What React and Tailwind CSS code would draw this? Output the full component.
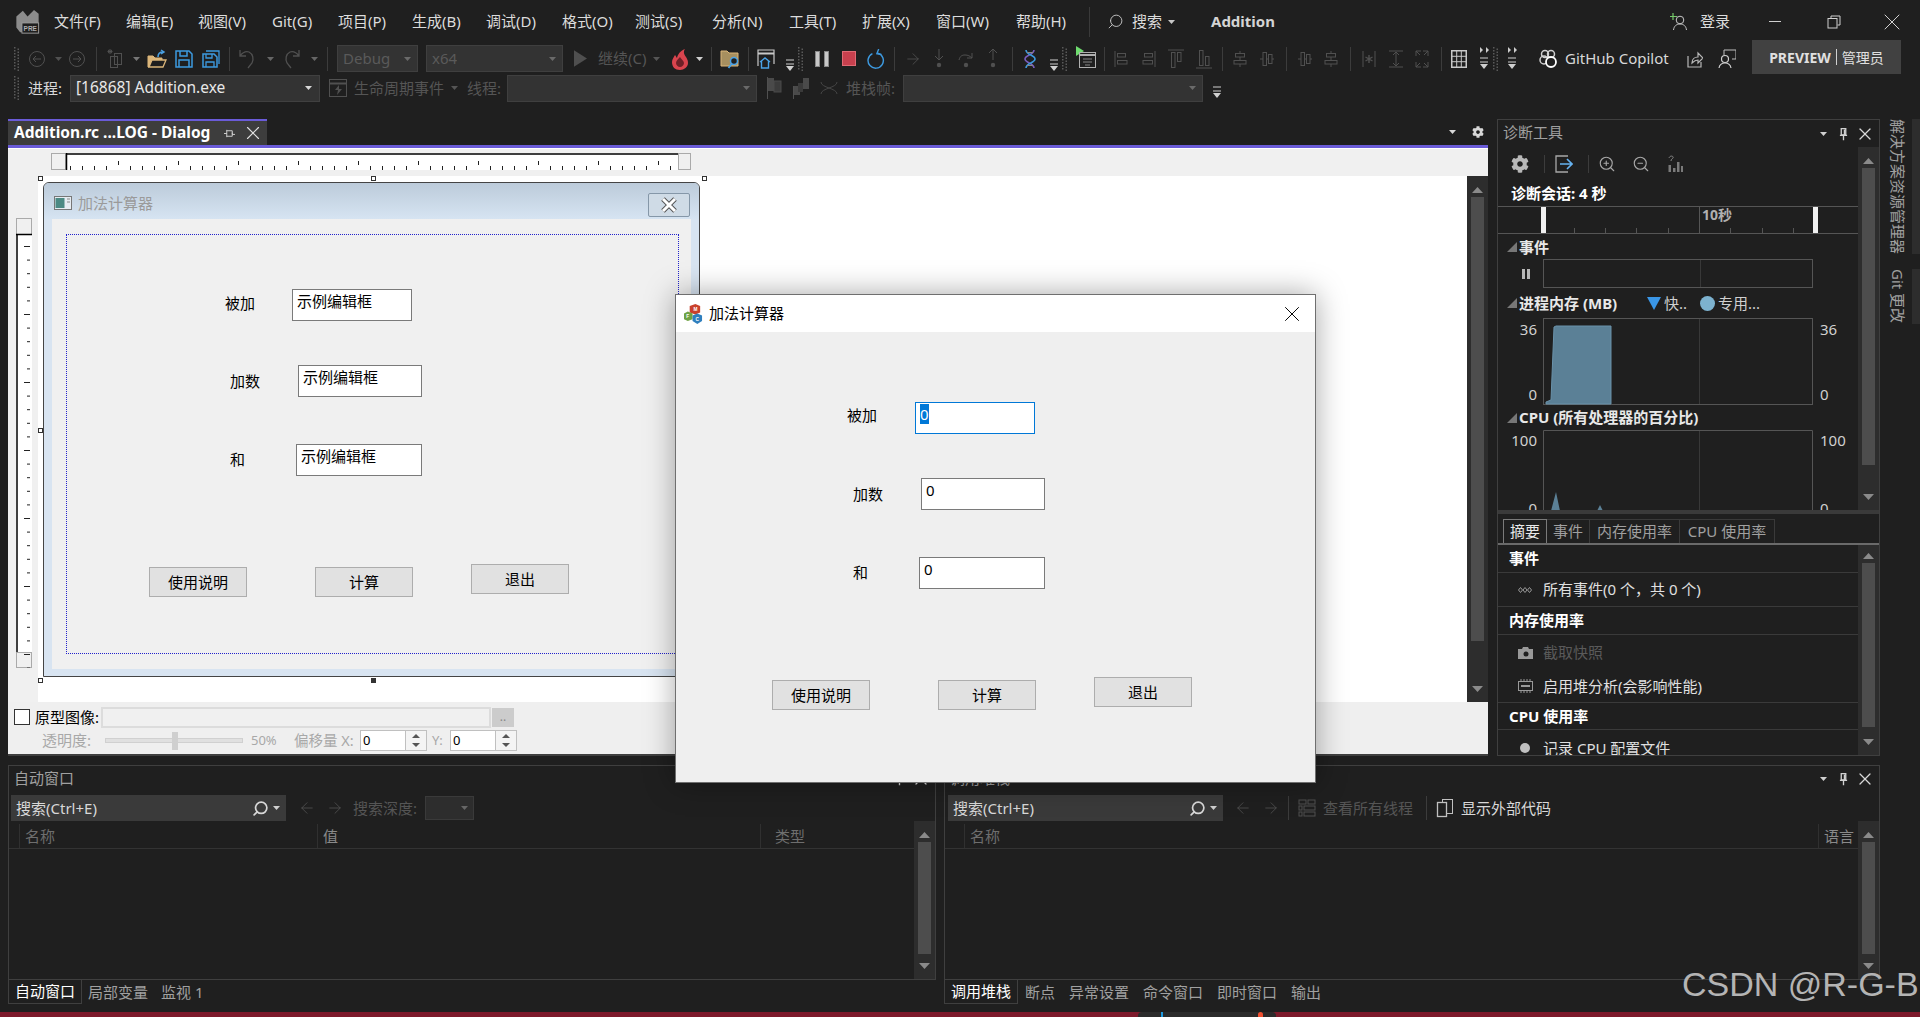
import React from 'react';
import { X, Search, ZoomIn, ZoomOut, ArrowLeft, ArrowRight } from 'lucide-react';
import { FaCog } from 'react-icons/fa';

const Dd = ({ c = '#bdbdbd', className = '' }) => (
  <svg viewBox="0 0 7 4" className={`w-[7px] h-[4px] shrink-0 ${className}`}><path d="M0 0h7L3.5 4z" fill={c} /></svg>
);
const StackDd = ({ className = '' }) => (
  <svg viewBox="0 0 8 14" className={`w-[8px] h-[14px] shrink-0 mt-[12px] ${className}`}><path d="M0 2h8M0 6h8" stroke="#d0d0d0" strokeWidth="1" /><path d="M0 8h8L4 13z" fill="#d0d0d0" /></svg>
);
const Grip = ({ className = '' }) => (
  <svg viewBox="0 0 6 24" className={`w-[6px] h-[24px] shrink-0 ${className}`}>
    {[0, 1, 2, 3, 4, 5, 6, 7].map(i => <g key={i} fill="#5a5a5a"><rect x="0" y={i * 3} width="1.5" height="1.5" /><rect x="3.5" y={i * 3 + 1.5} width="1.5" height="1.5" /></g>)}
  </svg>
);
const Sep = ({ className = '' }) => <div className={`w-px h-[24px] bg-[#3c3c3c] shrink-0 ${className}`} />;
const G = '#505050';
const Box = ({ className = '', children, vb = '0 0 16 16' }) => <svg viewBox={vb} fill="none" className={`shrink-0 ${className}`}>{children}</svg>;
const AlignL = ({ className }) => <Box className={`w-[14px] h-[18px] ${className}`} vb="0 0 14 18"><path d="M1 1v16" stroke={G} /><rect x="3.5" y="3.5" width="8" height="3.5" stroke={G} /><rect x="3.5" y="10.5" width="9.5" height="3.5" stroke={G} /></Box>;
const AlignR = ({ className }) => <Box className={`w-[14px] h-[18px] ${className}`} vb="0 0 14 18"><path d="M13 1v16" stroke={G} /><rect x="2.5" y="3.5" width="8" height="3.5" stroke={G} /><rect x="1" y="10.5" width="9.5" height="3.5" stroke={G} /></Box>;
const AlignT = ({ className }) => <Box className={`w-[16px] h-[20px] ${className}`} vb="0 0 16 20"><path d="M0 1h16" stroke={G} /><rect x="3.5" y="3.5" width="3.5" height="15" stroke={G} /><rect x="9.5" y="3.5" width="3.5" height="9" stroke={G} /></Box>;
const AlignB = ({ className }) => <Box className={`w-[16px] h-[20px] ${className}`} vb="0 0 16 20"><path d="M0 19h16" stroke={G} /><rect x="3.5" y="1.5" width="3.5" height="15" stroke={G} /><rect x="9.5" y="7.5" width="3.5" height="9" stroke={G} /></Box>;
const AlignCH = ({ className }) => <Box className={`w-[14px] h-[18px] ${className}`} vb="0 0 14 18"><path d="M7 1v16" stroke={G} /><rect x="2.5" y="3.5" width="9" height="3.5" stroke={G} fill="#1f1f1f" /><rect x="1" y="10.5" width="12" height="3.5" stroke={G} fill="#1f1f1f" /></Box>;
const AlignCV = ({ className }) => <Box className={`w-[14px] h-[18px] ${className}`} vb="0 0 14 18"><path d="M0 9h14" stroke={G} /><rect x="3" y="2.5" width="3.5" height="13" stroke={G} fill="#1f1f1f" /><rect x="8.5" y="4.5" width="3.5" height="9" stroke={G} fill="#1f1f1f" /></Box>;
const Pin = ({ className = '' }) => <svg viewBox="0 0 10 14" className={`w-[9px] h-[14px] shrink-0 ${className}`} fill="none"><path d="M2.5 1h5v7h-5z" stroke="#d0d0d0" strokeWidth="1.5" /><path d="M1 8.5h8M5 9v5" stroke="#d0d0d0" strokeWidth="1.5" /><path d="M6 2v6" stroke="#d0d0d0" strokeWidth="1.4" /></svg>;
const Tri = () => <svg viewBox="0 0 10 10" className="w-[10px] h-[10px] shrink-0"><path d="M10 0v10H0z" fill="#777" /></svg>;

const Logo = () => (
  <svg viewBox="0 0 26 28" className="w-[25px] h-[26px] ml-[15px] shrink-0">
    <path d="M1 8 L8 2 L13 8 L20 1 L25 5 V15 H9 V25 H5 L1 20z" fill="#8c8c8c" />
    <rect x="7" y="15" width="18" height="11" fill="#1f1f1f" stroke="#a0a0a0" />
    <text x="16" y="24" fontSize="7" fontWeight="700" textAnchor="middle" fill="#b0b0b0" fontFamily="Liberation Sans, sans-serif">PRE</text>
  </svg>
);

const Mfc = ({ className = '' }) => (
  <svg viewBox="0 0 20 22" className={`shrink-0 ${className}`}>
    <path d="M6 3l6-2 5 2v7l-5 2-6-2z" fill="#c9412c" />
    <path d="M0 11l4-2 5 2v6l-5 2-4-2z" fill="#6fa244" />
    <path d="M9 13l5-2 5 2v6l-5 3-5-3z" fill="#2f7fbe" />
    <text x="12" y="8" fontSize="5" fill="#fff" fontWeight="700" textAnchor="middle" fontFamily="Liberation Sans, sans-serif">M</text>
    <text x="4" y="16" fontSize="5" fill="#fff" fontWeight="700" textAnchor="middle" fontFamily="Liberation Sans, sans-serif">F</text>
    <text x="14" y="19" fontSize="5" fill="#fff" fontWeight="700" textAnchor="middle" fontFamily="Liberation Sans, sans-serif">C</text>
  </svg>
);

const Combo = ({ className = '', text, tc = 'text-[#555]', dd = '#6a6a6a', children }) => (
  <div className={`flex items-center justify-between bg-[#333333] border border-[#3f3f3f] px-[5px] shrink-0 ${className}`}>
    <span className={`truncate ${tc}`}>{text}{children}</span>
    <Dd c={dd} className="mr-[1px]" />
  </div>
);

function MenuBar() {
  return (
    <div className="h-[43px] flex items-center shrink-0 text-[15px] text-[#dcdcdc]">
      <Logo />
      <div className="ml-[14px] flex items-center whitespace-nowrap">
        <span className="w-[72px]">文件(F)</span>
        <span className="w-[72px]">编辑(E)</span>
        <span className="w-[74px]">视图(V)</span>
        <span className="w-[66px]">Git(G)</span>
        <span className="w-[74px]">项目(P)</span>
        <span className="w-[74px]">生成(B)</span>
        <span className="w-[76px]">调试(D)</span>
        <span className="w-[73px]">格式(O)</span>
        <span className="w-[77px]">测试(S)</span>
        <span className="w-[77px]">分析(N)</span>
        <span className="w-[73px]">工具(T)</span>
        <span className="w-[74px]">扩展(X)</span>
        <span className="w-[80px]">窗口(W)</span>
        <span className="w-[73px]">帮助(H)</span>
      </div>
      <div className="w-px h-[30px] bg-[#3a3a3a] shrink-0" />
      <Search size={17} strokeWidth={1.3} className="ml-[17px] -scale-x-100 text-[#c8c8c8] shrink-0" />
      <span className="ml-[8px] w-[31px] shrink-0">搜索</span>
      <Dd c="#c8c8c8" className="ml-[5px]" />
      <span className="ml-[36px] w-[65px] font-bold text-[#d4d4d4] shrink-0 whitespace-nowrap">Addition</span>
      <svg viewBox="0 0 18 18" className="w-[18px] h-[18px] ml-[394px] shrink-0" fill="none">
        <path d="M3 0v7M0 3.500h7" stroke="#76c96b" strokeWidth="1.2" />
        <circle cx="10" cy="7" r="3.8" stroke="#c8c8c8" />
        <path d="M3.500 17c.5-4 3-6 6.500-6s6 2 6.500 6" stroke="#c8c8c8" />
      </svg>
      <span className="ml-[12px] w-[30px] shrink-0">登录</span>
      <div className="ml-[39px] w-[12px] h-px bg-[#d0d0d0] shrink-0" />
      <svg viewBox="0 0 14 14" className="w-[14px] h-[14px] ml-[46px] shrink-0" fill="none" stroke="#d0d0d0"><rect x="1" y="3.500" width="9" height="9.500" /><path d="M4 3V1h9v9h-2.500" /></svg>
      <X size={28} strokeWidth={0.8} className="ml-[37px] text-[#e0e0e0] shrink-0" />
    </div>
  );
}

function Toolbar1() {
  return (
    <div className="h-[31px] flex items-center shrink-0 text-[15px]">
      <Grip className="ml-[14px]" />
      <Box className="w-[16px] h-[16px] ml-[9px]"><circle cx="8" cy="8" r="7.5" stroke={G} /><path d="M12 8H4M7 5L4 8l3 3" stroke={G} /></Box>
      <Dd c={G} className="ml-[10px]" />
      <Box className="w-[16px] h-[16px] ml-[7px]"><circle cx="8" cy="8" r="7.5" stroke={G} /><path d="M4 8h8M9 5l3 3-3 3" stroke={G} /></Box>
      <Sep className="ml-[11px]" />
      <Box className="w-[18px] h-[20px] ml-[10px]" vb="0 0 18 20"><rect x="7.5" y="4.5" width="7" height="11" stroke={G} /><rect x="3.5" y="7.5" width="7" height="11" stroke={G} /><path d="M3 0v5M.5 2.5h5M1 1l4 3M5 1L1 4" stroke={G} /></Box>
      <Dd c="#777" className="ml-[8px]" />
      <svg viewBox="0 0 20 20" fill="none" className="w-[20px] h-[20px] ml-[7px] shrink-0"><path d="M1 7h5l2 2h7v2H5l-3 7H1z" fill="#dcb67a" stroke="#dcb67a" /><path d="M5 11h14l-3 7H2z" fill="#1f1f1f" stroke="#dcb67a" strokeWidth="1.3" /><path d="M11 8c0-3 2-5 5-5M14 1l3 2-3 2" stroke="#4a9fe0" strokeWidth="1.5" /></svg>
      <Box className="w-[18px] h-[18px] ml-[8px]" vb="0 0 18 18"><path d="M1 1h13l3 3v13H1z" stroke="#3d9ae0" strokeWidth="1.5" /><path d="M5 1v5h7V1M4 17v-7h10v7" stroke="#3d9ae0" strokeWidth="1.5" /></Box>
      <Box className="w-[18px] h-[18px] ml-[9px]" vb="0 0 18 18"><path d="M4 1h13v13" stroke="#3d9ae0" strokeWidth="1.3" /><path d="M1 4h11l3 3v10H1z" stroke="#3d9ae0" strokeWidth="1.5" /><path d="M4 4v4h6V4M4 17v-5h8v5" stroke="#3d9ae0" strokeWidth="1.3" /></Box>
      <Sep className="ml-[9px]" />
      <Box className="w-[16px] h-[20px] ml-[9px]" vb="0 0 16 20"><path d="M1 1v6h6M1 7c3-4 6-5 9-4 4 2 5 7 3 11l-4 5" stroke={G} strokeWidth="1.3" /></Box>
      <Dd c="#666" className="ml-[12px]" />
      <Box className="w-[16px] h-[20px] ml-[10px]" vb="0 0 16 20"><path d="M15 1v6H9M15 7c-3-4-6-5-9-4-4 2-5 7-3 11l4 5" stroke={G} strokeWidth="1.3" /></Box>
      <Dd c="#666" className="ml-[11px]" />
      <Sep className="ml-[9px]" />
      <Combo className="w-[81px] h-[27px] ml-[9px] text-[15px]" text="Debug" tc="text-[#5a5a5a]" />
      <Combo className="w-[137px] h-[27px] ml-[8px] text-[15px]" text="x64" tc="text-[#5a5a5a]" />
      <svg viewBox="0 0 14 18" className="w-[13px] h-[17px] ml-[11px] shrink-0"><path d="M0 0l14 9-14 9z" fill="#4f4f4f" /></svg>
      <span className="ml-[11px] w-[55px] text-[#555] whitespace-nowrap">继续(C)</span>
      <Dd c="#555" />
      <svg viewBox="0 0 18 22" className="w-[18px] h-[22px] ml-[11px] shrink-0"><path d="M9 22c-5 0-8-3-8-8 0-3 2-5 3-7 1 1 1 2 2 3 1-4 3-7 8-9-2 3-1 5 1 8 1 2 2 3 2 6 0 4-4 7-8 7z" fill="#d9444e" /><path d="M9 19c-2 0-4-2-4-4s2-4 4-6c1 2 4 4 4 6s-2 4-4 4z" fill="#6d2027" /></svg>
      <Dd c="#d0d0d0" className="ml-[7px]" />
      <Sep className="ml-[8px]" />
      <svg viewBox="0 0 20 20" fill="none" className="w-[20px] h-[20px] ml-[8px] shrink-0"><path d="M1 2h6l2 2h9v13H1z" fill="#a78f5f" stroke="#dcb67a" /><circle cx="14" cy="12" r="3.5" fill="#1f1f1f" stroke="#4aa3e8" strokeWidth="1.5" /><path d="M11.500 15l-3 4" stroke="#4aa3e8" strokeWidth="1.8" /></svg>
      <Sep className="ml-[8px]" />
      <svg viewBox="0 0 18 20" fill="none" className="w-[18px] h-[20px] ml-[8px] shrink-0"><path d="M1 17V1h16v14" stroke="#c8c8c8" strokeWidth="1.2" /><path d="M1 4.500h16" stroke="#c8c8c8" strokeWidth="2" /><path d="M3 13l5-4 5 4M4.500 12v7h7v-7" stroke="#4aa3e8" strokeWidth="1.4" /></svg>
      <StackDd className="ml-[11px]" />
      <Grip className="ml-[4px]" />
      <div className="w-[14px] h-[16px] ml-[11px] flex justify-between shrink-0"><div className="w-[5px] bg-[#c8c8c8] border border-[#888]" /><div className="w-[5px] bg-[#c8c8c8] border border-[#888]" /></div>
      <div className="w-[14px] h-[15px] ml-[13px] bg-[#c8404e] border border-[#e06a74] shrink-0" />
      <svg viewBox="0 0 20 22" fill="none" className="w-[18px] h-[20px] ml-[11px] shrink-0"><path d="M12 4.500A8.500 8.500 0 1 1 6 5" stroke="#3d9ae0" strokeWidth="1.6" /><path d="M13 0l-2 5 5 1" stroke="#3d9ae0" strokeWidth="1.6" /></svg>
      <Sep className="ml-[9px]" />
      <ArrowRight size={18} strokeWidth={1} className="ml-[9px] text-[#555] shrink-0" />
      <Box className="w-[12px] h-[20px] ml-[11px]" vb="0 0 12 20"><path d="M6 0v11M2 7l4 4 4-4" stroke={G} /><circle cx="6" cy="16" r="2.2" fill={G} /></Box>
      <Box className="w-[16px] h-[20px] ml-[13px]" vb="0 0 16 20"><path d="M1 11c1-4 3-5 6-5 3 0 5 1 7 3M14 4v5h-5" stroke={G} /><circle cx="8" cy="16" r="2.2" fill={G} /></Box>
      <Box className="w-[12px] h-[20px] ml-[13px]" vb="0 0 12 20"><path d="M6 11V0M2 4l4-4 4 4" stroke={G} /><circle cx="6" cy="16" r="2.2" fill={G} /></Box>
      <Sep className="ml-[13px]" />
      <svg viewBox="0 0 18 20" fill="none" className="w-[18px] h-[20px] ml-[8px] shrink-0"><path d="M13 1C13 6 4 6 4 10s9 4 9 9" stroke="#7a5fc0" strokeWidth="1.6" /><path d="M5 1C5 6 14 6 14 10s-9 4-9 9" stroke="#3d9ae0" strokeWidth="1.6" /><path d="M6 3.500h6M6 16.500h6" stroke="#888" /></svg>
      <StackDd className="ml-[11px]" />
      <Grip className="ml-[4px]" />
      <svg viewBox="0 0 20 24" fill="none" className="w-[20px] h-[24px] ml-[8px] shrink-0 -mt-[2px]"><path d="M0 0l8 5-8 5z" fill="#6fdc6f" /><rect x="3.500" y="6.500" width="16" height="15" stroke="#b0b0b0" /><path d="M3 9h17" stroke="#b0b0b0" strokeWidth="2" /><path d="M7 13h9M7 16h9M9 19h5" stroke="#888" /></svg>
      <Sep className="ml-[8px]" />
      <AlignL className="ml-[9px]" />
      <AlignR className="ml-[14px]" />
      <AlignT className="ml-[12px]" />
      <AlignB className="ml-[12px]" />
      <Sep className="ml-[10px]" />
      <AlignCH className="ml-[10px]" />
      <AlignCV className="ml-[13px]" />
      <Sep className="ml-[12px]" />
      <AlignCV className="ml-[11px]" />
      <AlignCH className="ml-[12px]" />
      <Sep className="ml-[12px]" />
      <Box className="w-[14px] h-[18px] ml-[11px]" vb="0 0 14 18"><path d="M1 1v16M13 1v16" stroke={G} /><path d="M7 5v8M3.500 7l7 4M10.500 7l-7 4" stroke={G} strokeWidth="1.4" /></Box>
      <Box className="w-[14px] h-[18px] ml-[13px]" vb="0 0 14 18"><path d="M0 1h14M0 17h14M7 2v14M4 5l3-3 3 3M4 13l3 3 3-3" stroke={G} /></Box>
      <Box className="w-[14px] h-[18px] ml-[12px]" vb="0 0 14 18"><path d="M1 6V1h5M8 1h5v5M1 12v5h5M13 12v5H8M1 1l4 4M13 1L9 5M1 17l4-4M13 17l-4-4" stroke={G} /></Box>
      <Sep className="ml-[12px]" />
      <svg viewBox="0 0 16 18" fill="none" className="w-[16px] h-[18px] ml-[9px] shrink-0"><rect x=".75" y=".75" width="14.500" height="16.500" stroke="#c8c8c8" strokeWidth="1.5" /><path d="M5.700 1v16M10.300 1v16M1 6.300h14M1 11.700h14" stroke="#c8c8c8" /></svg>
      <div className="ml-[13px] flex flex-col items-center gap-[3px] shrink-0 w-[8px]"><span className="flex gap-[3px]"><i className="w-0 h-0 border-y-[3px] border-y-transparent border-l-[3px] border-l-[#ccc]" /><i className="w-0 h-0 border-y-[3px] border-y-transparent border-l-[3px] border-l-[#ccc]" /></span><StackDd className="!mt-0" /></div>
      <Grip className="ml-[5px]" />
      <div className="ml-[9px] flex flex-col items-center gap-[3px] shrink-0 w-[8px]"><span className="flex gap-[3px]"><i className="w-0 h-0 border-y-[3px] border-y-transparent border-l-[3px] border-l-[#ccc]" /><i className="w-0 h-0 border-y-[3px] border-y-transparent border-l-[3px] border-l-[#ccc]" /></span><StackDd className="!mt-0" /></div>
      <svg viewBox="0 0 18 20" fill="none" className="w-[18px] h-[20px] ml-[23px] shrink-0"><circle cx="6" cy="5" r="3.500" stroke="#d0d0d0" strokeWidth="1.5" /><circle cx="12" cy="5" r="3.500" stroke="#d0d0d0" strokeWidth="1.5" /><circle cx="5" cy="11" r="4" stroke="#d0d0d0" strokeWidth="1.5" /><circle cx="12" cy="13" r="5" fill="#1f1f1f" stroke="#fff" strokeWidth="1.8" /></svg>
      <span className="ml-[8px] w-[110px] text-[#d8d8d8] whitespace-nowrap shrink-0">GitHub Copilot</span>
      <svg viewBox="0 0 16 18" fill="none" className="w-[16px] h-[18px] ml-[12px] shrink-0"><path d="M1 6v11h13v-5" stroke="#b8b8b8" strokeWidth="1.2" /><path d="M5 13c0-4 3-6 6-6V3l5 5-5 5V10c-3 0-4 1-6 3z" stroke="#b8b8b8" strokeWidth="1.2" /></svg>
      <svg viewBox="0 0 18 20" fill="none" className="w-[18px] h-[20px] ml-[15px] shrink-0"><path d="M6 6V1h12v9l-4 0" stroke="#c0c0c0" /><circle cx="7" cy="10" r="3.500" stroke="#d0d0d0" strokeWidth="1.2" /><path d="M1 19c.5-3 3-5 6-5s5.500 2 6 5" stroke="#d0d0d0" strokeWidth="1.2" /></svg>
      <div className="ml-[16px] w-[149px] h-[34px] -mt-[3px] bg-[#414141] flex items-center justify-center shrink-0 text-[#e0e0e0] font-bold text-[14px]">
        <span>PREVIEW</span><span className="w-px h-[16px] bg-[#d0d0d0] mx-[5px]" /><span className="font-normal">管理员</span>
      </div>
    </div>
  );
}

function Toolbar2() {
  return (
    <div className="h-[28px] flex items-center shrink-0 text-[15px]">
      <Grip className="ml-[14px]" />
      <span className="ml-[8px] text-[#d8d8d8] w-[42px] whitespace-nowrap">进程:</span>
      <div className="w-[250px] h-[27px] bg-[#333333] border border-[#404040] flex items-center justify-between pl-[5px] pr-[7px] text-[#e8e8e8] text-[15.5px] shrink-0">
        <span>[16868] Addition.exe</span><Dd c="#d8d8d8" />
      </div>
      <svg viewBox="0 0 18 18" fill="none" className="w-[18px] h-[18px] ml-[9px] shrink-0"><rect x=".5" y=".5" width="17" height="17" stroke={G} /><path d="M1 4.500h16" stroke={G} strokeWidth="2" /><path d="M10 6L6 11h3l-1 5 5-6h-3z" fill={G} /></svg>
      <span className="ml-[7px] w-[92px] text-[#555] whitespace-nowrap">生命周期事件</span>
      <Dd c="#555" className="ml-[5px]" />
      <span className="ml-[9px] w-[40px] text-[#555] whitespace-nowrap">线程:</span>
      <Combo className="w-[250px] h-[27px]" text="" />
      <Box className="w-[15px] h-[22px] ml-[10px]" vb="0 0 15 22"><path d="M.5 0v22" stroke={G} /><rect x="1" y="1" width="6" height="13" fill="#4a4a4a" /><rect x="7" y="4" width="7" height="11" fill="#3c3c3c" stroke="#4a4a4a" /></Box>
      <Box className="w-[18px] h-[22px] ml-[10px]" vb="0 0 18 22"><path d="M1.500 9v13" stroke={G} /><rect x="2" y="9" width="6" height="9" fill="#4a4a4a" /><rect x="6" y="6" width="5" height="9" fill="#3a3a3a" /><rect x="11" y="1" width="6" height="11" fill="#4a4a4a" /></Box>
      <Box className="w-[18px] h-[14px] ml-[10px]" vb="0 0 18 14"><path d="M1 1c0 6 16 6 16 12M17 1C17 7 1 7 1 13" stroke="#454545" /></Box>
      <span className="ml-[8px] w-[57px] text-[#555] whitespace-nowrap">堆栈帧:</span>
      <Combo className="w-[300px] h-[27px]" text="" />
      <StackDd className="ml-[10px] !mt-[8px]" />
    </div>
  );
}

function HRuler() {
  const ticks = Array.from({ length: 51 }, (_, i) => i);
  return (
    <svg viewBox="0 0 640 17" className="w-[640px] h-[17px] ml-[43px] mt-[4px] shrink-0 bg-white">
      <rect x=".5" y=".5" width="14" height="16" fill="#f0f0f0" stroke="#aaa" />
      <rect x="627.500" y=".5" width="12" height="16" fill="#f0f0f0" stroke="#aaa" />
      <path d="M15 1h612M15.500 0v17" stroke="#000" strokeWidth="1.5" />
      {ticks.map(i => <path key={i} d={`M${15 + i * 12 + 4.5} ${i % 5 === 4 ? 8 : 13}v4`} stroke="#222" />)}
    </svg>
  );
}

function VRuler() {
  const ticks = Array.from({ length: 32 }, (_, i) => i);
  return (
    <svg viewBox="0 0 16 450" className="w-[16px] h-[450px] ml-[8px] mt-[42px] shrink-0 bg-white">
      <rect x=".5" y=".5" width="15" height="16" fill="#f0f0f0" stroke="#aaa" />
      <rect x=".5" y="434.500" width="15" height="15" fill="#f0f0f0" stroke="#aaa" />
      <path d="M1 16v418M0 16.500h16" stroke="#000" strokeWidth="1.5" />
      {ticks.map(i => <path key={i} d={`M${i % 5 === 0 ? 8 : 11} ${28 + i * 13.6 + .5}H14`} stroke="#222" />)}
    </svg>
  );
}

const DlgLabel = ({ className, children }) => <div className={`absolute h-[20px] leading-[20px] text-[15px] text-black ${className}`}>{children}</div>;
const Edit = ({ className, children }) => <div className={`absolute bg-white border border-[#7a7a7a] pl-[4px] leading-[22px] text-[15px] text-black ${className}`}>{children}</div>;
const Btn = ({ className, children }) => <div className={`absolute w-[98px] h-[30px] bg-[#e1e1e1] border border-[#adadad] flex items-center justify-center text-[15px] text-black ${className}`}>{children}</div>;
const Handle = ({ className, on }) => <div className={`absolute w-[5px] h-[5px] border border-[#333] ${on ? 'bg-[#333]' : 'bg-white'} ${className}`} />;

function Designer() {
  return (
    <div className="flex-1 relative bg-white">
      <Handle className="left-[0px] top-[0px]" />
      <Handle className="left-[333px] top-[0px]" />
      <Handle className="left-[664px] top-[0px]" />
      <Handle className="left-[0px] top-[252px]" />
      <Handle className="left-[0px] top-[502px]" />
      <Handle className="left-[333px] top-[502px]" on />
      <div className="absolute left-[5px] top-[6px] w-[657px] h-[495px] rounded-t-[6px] border border-[#444] bg-[#d8e4f1] flex flex-col overflow-hidden">
        <div className="h-[36px] bg-gradient-to-b from-[#bccbda] to-[#d6e4f2] flex items-center shrink-0 relative">
          <svg viewBox="0 0 18 14" className="w-[18px] h-[14px] ml-[10px] mt-[4px]"><rect x=".5" y=".5" width="17" height="13" fill="#e6ecf2" stroke="#777" /><rect x="1.500" y="2" width="9" height="10" fill="#4c8a84" /><path d="M13 3h3M13 6h3" stroke="#888" /></svg>
          <span className="ml-[6px] mt-[4px] text-[15px] text-[#9a9a9a]">加法计算器</span>
          <div className="absolute right-[9px] top-[10px] w-[42px] h-[24px] rounded-[2px] border border-[#8597a8] bg-[#cfdbe6] flex items-center justify-center">
            <svg viewBox="0 0 18 16" className="w-[18px] h-[16px]"><path d="M3 2l12 12M15 2L3 14" stroke="#555" strokeWidth="5" /><path d="M3 2l12 12M15 2L3 14" stroke="#fff" strokeWidth="3" /></svg>
          </div>
        </div>
        <div className="flex-1 mx-[8px] mb-[7px] bg-[#f0f0f0] relative">
          <div className="absolute left-[14px] top-[15px] w-[613px] h-[420px] border border-dotted border-[#2222cc]" />
        </div>
        <DlgLabel className="left-[181px] top-[110px]">被加</DlgLabel>
        <Edit className="left-[248px] top-[106px] w-[120px] h-[32px]">示例编辑框</Edit>
        <DlgLabel className="left-[186px] top-[188px]">加数</DlgLabel>
        <Edit className="left-[254px] top-[182px] w-[124px] h-[32px]">示例编辑框</Edit>
        <DlgLabel className="left-[186px] top-[266px]">和</DlgLabel>
        <Edit className="left-[252px] top-[261px] w-[126px] h-[32px]">示例编辑框</Edit>
        <Btn className="left-[105px] top-[384px]">使用说明</Btn>
        <Btn className="left-[271px] top-[384px]">计算</Btn>
        <Btn className="left-[427px] top-[381px]">退出</Btn>
      </div>
    </div>
  );
}

function VScroll({ className = '', thumb = '', up = '' }) {
  return (
    <div className={`w-[21px] bg-[#2d2d2d] flex flex-col items-center shrink-0 relative ${className}`}>
      <svg viewBox="0 0 11 6" className={`w-[11px] h-[6px] mt-[11px] shrink-0 ${up}`}><path d="M5.500 0L11 6H0z" fill="#8a8a8a" /></svg>
      <div className={`w-[13px] bg-[#4d4d4d] mt-[4px] shrink-0 ${thumb}`} />
      <svg viewBox="0 0 11 6" className="w-[11px] h-[6px] mt-auto mb-[10px] shrink-0"><path d="M5.500 6L11 0H0z" fill="#8a8a8a" /></svg>
    </div>
  );
}

function Editor() {
  return (
    <div className="w-[1480px] flex flex-col shrink-0">
      <div className="h-[26px] flex shrink-0">
        <div className="w-[259px] h-[26px] bg-[#3d3d3d] border-t-[2px] border-[#6a5bd8] flex items-center text-white font-bold text-[15.5px]">
          <span className="ml-[6px] whitespace-nowrap">Addition.rc ...LOG - Dialog</span>
          <svg viewBox="0 0 12 12" className="w-[11px] h-[11px] ml-auto shrink-0" fill="none" stroke="#d8d8d8"><path d="M3 2v8M3 6H0M3 3h6v6H3M9 5v2h3" /></svg>
          <X size={22} strokeWidth={1.2} className="ml-[7px] mr-[3px] text-[#e0e0e0] shrink-0" />
        </div>
        <div className="flex-1 flex items-center justify-end pr-[2px]">
          <Dd c="#d8d8d8" />
          <FaCog size={12} className="ml-[16px] mr-[2px] text-[#d8d8d8]" />
        </div>
      </div>
      <div className="h-[3px] bg-[#6a5bd8] shrink-0" />
      <div className="h-[28px] bg-[#f0f0f0] flex shrink-0 border-t border-white"><HRuler /></div>
      <div className="h-[526px] flex shrink-0">
        <div className="w-[30px] bg-[#f0f0f0] shrink-0 flex"><VRuler /></div>
        <Designer />
        <VScroll thumb="h-[444px]" />
      </div>
      <div className="h-[54px] bg-[#efefef] border-b-2 border-[#3f3f3f] shrink-0 text-[15px] flex flex-col">
        <div className="h-[26px] flex items-center pl-[6px] pt-[4px]">
          <div className="w-[16px] h-[16px] border border-[#333] bg-white shrink-0" />
          <span className="ml-[5px] text-black w-[66px] whitespace-nowrap">原型图像:</span>
          <div className="w-[390px] h-[21px] bg-[#f0f0f0] border-2 border-[#dcdcdc] shrink-0" />
          <div className="w-[22px] h-[19px] bg-[#cccccc] ml-[1px] text-[#888] text-[12px] flex items-center justify-center leading-none shrink-0">..</div>
        </div>
        <div className="h-[25px] flex items-center pl-[34px] text-[#a8a8a8]">
          <span className="w-[63px] whitespace-nowrap">透明度:</span>
          <div className="w-[138px] h-[5px] bg-[#e0e0e0] border border-[#d0d0d0] relative shrink-0"><div className="absolute left-[66px] -top-[7px] w-[6px] h-[18px] bg-[#cfcfcf]" /></div>
          <span className="ml-[8px] w-[43px] text-[13px]">50%</span>
          <span className="w-[66px] whitespace-nowrap text-[14.5px]">偏移量 X:</span>
          <div className="w-[67px] h-[21px] bg-white border border-[#c0c0c0] text-black text-[13px] pl-[2px] flex items-center justify-between shrink-0">0
            <div className="w-[21px] h-full flex flex-col items-center justify-around bg-[#f4f4f4] border-l border-[#c0c0c0]"><svg viewBox="0 0 8 4" className="w-[8px] h-[4px]"><path d="M4 0l4 4H0z" fill="#555" /></svg><svg viewBox="0 0 8 4" className="w-[8px] h-[4px]"><path d="M4 4l4-4H0z" fill="#555" /></svg></div>
          </div>
          <span className="ml-[5px] w-[18px] text-[13px]">Y:</span>
          <div className="w-[67px] h-[21px] bg-white border border-[#c0c0c0] text-black text-[13px] pl-[2px] flex items-center justify-between shrink-0">0
            <div className="w-[21px] h-full flex flex-col items-center justify-around bg-[#f4f4f4] border-l border-[#c0c0c0]"><svg viewBox="0 0 8 4" className="w-[8px] h-[4px]"><path d="M4 0l4 4H0z" fill="#555" /></svg><svg viewBox="0 0 8 4" className="w-[8px] h-[4px]"><path d="M4 4l4-4H0z" fill="#555" /></svg></div>
          </div>
        </div>
      </div>
    </div>
  );
}

const SecHead = ({ className = '', children }) => (
  <div className={`flex items-center pl-[9px] text-[15px] font-bold text-[#e8e8e8] shrink-0 ${className}`}>
    <Tri /><span className="ml-[2px] whitespace-nowrap">{children}</span>
  </div>
);
const TitleIcons = () => (
  <div className="ml-auto flex items-center mr-[4px]">
    <Dd c="#d0d0d0" />
    <Pin className="ml-[12px]" />
    <X size={20} strokeWidth={1.5} className="ml-[7px] text-[#d8d8d8]" />
  </div>
);

function DiagPanel() {
  return (
    <div className="w-[383px] ml-[9px] border border-[#3f3f3f] flex flex-col shrink-0 text-[#d0d0d0]">
      <div className="h-[27px] flex items-center shrink-0">
        <span className="ml-[5px] mb-[2px] text-[15px] text-[#a0a0a0]">诊断工具</span>
        <TitleIcons />
      </div>
      <div className="h-[363px] flex shrink-0">
        <div className="flex-1 flex flex-col overflow-hidden">
          <div className="h-[34px] flex items-center shrink-0">
            <FaCog size={18} className="ml-[13px] text-[#b8b8b8]" />
            <Sep className="ml-[15px] !h-[18px]" />
            <svg viewBox="0 0 18 18" fill="none" className="w-[18px] h-[18px] ml-[10px]"><path d="M13 1H1v16h12" stroke="#a8a8a8" strokeWidth="1.3" /><path d="M5 9h12M12 4l5 5-5 5" stroke="#66b2f0" strokeWidth="1.6" /></svg>
            <Sep className="ml-[15px] !h-[18px]" />
            <ZoomIn size={18} strokeWidth={1.5} className="ml-[9px] text-[#a8a8a8]" />
            <ZoomOut size={18} strokeWidth={1.5} className="ml-[16px] text-[#a8a8a8]" />
            <svg viewBox="0 0 16 18" fill="none" className="w-[16px] h-[18px] ml-[17px]"><path d="M2 3c1-3 5-2 4 0-.500 1-2 1-2 3" stroke="#888" /><path d="M1.500 10v7h2.500v-7zM6 13v4h2.500v-4zM10 7v10h2.500V7zM14 11v6h2v-6z" fill="#7a7a7a" /></svg>
          </div>
          <div className="h-[25px] pl-[13px] flex items-center text-[15px] font-bold text-white shrink-0 whitespace-nowrap">诊断会话: 4 秒</div>
          <svg viewBox="0 0 360 29" className="w-[360px] h-[29px] shrink-0">
            <path d="M0 .5h360M0 27.500h360" stroke="#555" />
            <rect x="43" y="1" width="5" height="26" fill="#f0f0f0" />
            <rect x="315" y="1" width="5" height="26" fill="#f0f0f0" />
            <path d="M201.500 1v26" stroke="#555" />
            {[76, 107, 138, 170, 232, 264, 295].map(x => <path key={x} d={`M${x + .5} 22v5`} stroke="#555" />)}
            <text x="204" y="14" fontSize="14" fontWeight="700" fill="#b0b0b0">10秒</text>
          </svg>
          <SecHead className="h-[24px]">事件</SecHead>
          <div className="h-[29px] flex shrink-0 relative">
            <div className="w-[45px] flex items-center pl-[24px]"><div className="flex gap-[2px]"><div className="w-[3px] h-[10px] bg-[#b8b8b8]" /><div className="w-[3px] h-[10px] bg-[#b8b8b8]" /></div></div>
            <div className="w-[270px] border border-[#555] relative"><div className="absolute left-[156px] top-0 bottom-0 w-px bg-[#383838]" /></div>
          </div>
          <div className="h-[30px] flex items-center shrink-0 relative">
            <SecHead className="w-[128px]">进程内存 (MB)</SecHead>
            <svg viewBox="0 0 14 13" className="w-[14px] h-[13px] ml-[21px]"><path d="M0 0h14L7 13z" fill="#3a96e6" /></svg>
            <span className="ml-[3px] text-[15px] w-[33px] whitespace-nowrap">快..</span>
            <div className="w-[15px] h-[15px] rounded-full bg-[#7db2cf] ml-[3px]" />
            <span className="ml-[3px] text-[15px]">专用...</span>
          </div>
          <div className="h-[87px] flex shrink-0 text-[15px]">
            <div className="w-[45px] flex flex-col justify-between items-end pr-[6px] py-[1px] leading-[20px]"><span>36</span><span>0</span></div>
            <svg viewBox="0 0 270 87" className="w-[270px] h-[87px] shrink-0"><rect x=".5" y=".5" width="269" height="86" fill="#1f1f1f" stroke="#555" /><path d="M3 86V84L8 82 11 9 13 8H68V86z" fill="#5b8096" stroke="#6a92aa" /><path d="M156.500 1v85" stroke="#383838" /></svg>
            <div className="flex flex-col justify-between pl-[7px] py-[1px] leading-[20px]"><span>36</span><span>0</span></div>
          </div>
          <SecHead className="h-[25px]">CPU (所有处理器的百分比)</SecHead>
          <div className="h-[81px] flex shrink-0 text-[15px]">
            <div className="w-[45px] flex flex-col justify-between items-end pr-[6px] leading-[20px] -mb-[7px]"><span>100</span><span>0</span></div>
            <svg viewBox="0 0 270 81" className="w-[270px] h-[81px] shrink-0"><path d="M.5 81V.5h269V81" stroke="#555" fill="none" /><path d="M156.500 1v80" stroke="#383838" /><path d="M8 81L13 62 17 81zM54 81l3-6 3 6z" fill="#5b8096" /></svg>
            <div className="flex flex-col justify-between pl-[7px] leading-[20px] -mb-[7px]"><span>100</span><span>0</span></div>
          </div>
        </div>
        <VScroll thumb="h-[297px]" />
      </div>
      <div className="h-[4px] bg-[#3a3a3a] shrink-0" />
      <div className="h-[31px] pt-[5px] pl-[5px] flex shrink-0 text-[15px] text-[#a0a0a0] border-b-2 border-[#6a6a6a]">
        <div className="w-[44px] border border-[#7a7a7a] border-b-0 flex items-center justify-center text-[#e8e8e8]">摘要</div>
        <div className="w-[43px] border border-[#3a3a3a] border-l-0 border-b-0 flex items-center justify-center">事件</div>
        <div className="w-[90px] border border-[#3a3a3a] border-l-0 border-b-0 flex items-center justify-center">内存使用率</div>
        <div className="w-[95px] border border-[#3a3a3a] border-l-0 border-b-0 flex items-center justify-center whitespace-nowrap">CPU 使用率</div>
      </div>
      <div className="flex-1 flex overflow-hidden">
        <div className="flex-1 flex flex-col text-[15px] text-[#e0e0e0] overflow-hidden">
          <div className="h-[28px] flex items-center pl-[11px] font-bold text-white border-b border-[#3a3a3a] shrink-0">事件</div>
          <div className="h-[34px] flex items-center border-b border-[#3a3a3a] shrink-0">
            <svg viewBox="0 0 14 6" fill="none" stroke="#999" className="w-[14px] h-[6px] ml-[20px]"><path d="M2.500.5l2 2.500-2 2.500L.5 3zM7 .5L9 3 7 5.500 5 3zM11.500.5l2 2.500-2 2.500-2-2.500z" /></svg>
            <span className="ml-[11px] whitespace-nowrap">所有事件(0 个，共 0 个)</span>
          </div>
          <div className="h-[28px] flex items-center pl-[11px] font-bold text-white border-b border-[#3a3a3a] shrink-0">内存使用率</div>
          <div className="h-[35px] flex items-center shrink-0">
            <svg viewBox="0 0 15 12" className="w-[15px] h-[12px] ml-[20px]"><path d="M0 2h4l1-2h5l1 2h4v10H0z" fill="#999" /><circle cx="8" cy="7" r="2.500" fill="#1f1f1f" /></svg>
            <span className="ml-[10px] text-[#5a5a5a]">截取快照</span>
          </div>
          <div className="h-[33px] flex items-center border-b border-[#3a3a3a] shrink-0">
            <svg viewBox="0 0 15 14" fill="none" className="w-[15px] h-[14px] ml-[20px]"><rect x=".5" y="2.500" width="14" height="9" stroke="#999" /><path d="M3 7h9" stroke="#999" strokeWidth="2" /><path d="M3 0v2M6 0v2M9 0v2M12 0v2M3 12v2M6 12v2M9 12v2M12 12v2" stroke="#999" /></svg>
            <span className="ml-[10px] whitespace-nowrap">启用堆分析(会影响性能)</span>
          </div>
          <div className="h-[27px] flex items-center pl-[11px] font-bold text-white border-b border-[#3a3a3a] shrink-0">CPU 使用率</div>
          <div className="h-[36px] flex items-center shrink-0">
            <div className="w-[10px] h-[10px] rounded-full bg-[#c0c0c0] ml-[22px]" />
            <span className="ml-[13px] whitespace-nowrap">记录 CPU 配置文件</span>
          </div>
        </div>
        <VScroll thumb="h-[164px]" up="!mt-[8px]" />
      </div>
    </div>
  );
}

function SideTabs() {
  return (
    <div className="w-[40px] flex flex-col shrink-0 text-[15px] text-[#a0a0a0]">
      <div className="h-[135px] flex justify-between">
        <span className="[writing-mode:vertical-rl] ml-[6px] whitespace-nowrap [text-orientation:sideways]">解决方案资源管理器</span>
        <div className="w-[8px] bg-[#2d2d2d]" />
      </div>
      <div className="h-[55px] flex justify-between mt-[15px]">
        <span className="[writing-mode:vertical-rl] ml-[6px] whitespace-nowrap [text-orientation:sideways]">Git 更改</span>
        <div className="w-[8px] bg-[#2d2d2d]" />
      </div>
    </div>
  );
}

function PanelSearch({ className = '' }) {
  return (
    <div className={`w-[275px] h-[26px] bg-[#3a3a3a] flex items-center text-[15px] text-[#d8d8d8] pl-[5px] shrink-0 ${className}`}>
      搜索(Ctrl+E)
      <Search size={17} strokeWidth={2.4} className="ml-auto -scale-x-100 text-[#d8d8d8]" />
      <Dd c="#d0d0d0" className="ml-[4px] mr-[6px]" />
    </div>
  );
}

function AutoPanel() {
  return (
    <div className="w-[928px] flex flex-col shrink-0">
      <div className="h-[215px] border border-[#3f3f3f] flex flex-col text-[15px] text-[#a0a0a0]">
        <div className="h-[29px] flex items-center shrink-0 pl-[5px] pb-[4px]">自动窗口<TitleIcons /></div>
        <div className="h-[26px] flex items-center shrink-0 pl-[2px]">
          <PanelSearch />
          <ArrowLeft size={18} strokeWidth={1} className="ml-[12px] text-[#555]" />
          <ArrowRight size={18} strokeWidth={1} className="ml-[10px] text-[#555]" />
          <span className="ml-[9px] w-[72px] text-[#555] whitespace-nowrap">搜索深度:</span>
          <div className="w-[49px] h-[24px] bg-[#2d2d2d] border border-[#3a3a3a] flex items-center justify-end pr-[5px]"><Dd c="#666" /></div>
        </div>
        <div className="flex-1 flex">
          <div className="flex-1 flex flex-col">
            <div className="h-[28px] flex items-center border-b border-[#333] text-[#6e6e6e] shrink-0 pt-[3px]">
              <div className="w-[11px] h-full border-r border-[#303030]" />
              <div className="w-[298px] h-full border-r border-[#303030] pl-[5px] flex items-center text-[#6e6e6e]">名称</div>
              <div className="w-[443px] h-full border-r border-[#303030] pl-[5px] flex items-center text-[#8a8a8a]">值</div>
              <div className="pl-[14px] flex items-center">类型</div>
            </div>
          </div>
          <VScroll thumb="h-[112px]" />
        </div>
      </div>
      <div className="h-[24px] flex text-[15px] text-[#a0a0a0] items-stretch">
        <div className="w-[74px] border border-t-0 border-[#3f3f3f] flex items-center justify-center text-white">自动窗口</div>
        <span className="ml-[6px] flex items-center">局部变量</span>
        <span className="ml-[13px] flex items-center">监视 1</span>
      </div>
    </div>
  );
}

function StackPanel() {
  return (
    <div className="w-[936px] ml-[8px] flex flex-col shrink-0">
      <div className="h-[215px] border border-[#3f3f3f] flex flex-col text-[15px] text-[#a0a0a0]">
        <div className="h-[29px] flex items-center shrink-0 pl-[5px] pb-[4px]">调用堆栈<TitleIcons /></div>
        <div className="h-[26px] flex items-center shrink-0 pl-[3px]">
          <PanelSearch />
          <ArrowLeft size={18} strokeWidth={1} className="ml-[11px] text-[#555]" />
          <ArrowRight size={18} strokeWidth={1} className="ml-[10px] text-[#555]" />
          <Sep className="ml-[8px]" />
          <svg viewBox="0 0 18 18" fill="none" stroke="#505050" className="w-[18px] h-[18px] ml-[9px]"><rect x="1" y="1" width="7" height="4" /><rect x="10" y="1" width="7" height="4" /><rect x="1" y="7" width="3" height="4" /><rect x="6" y="7" width="11" height="4" /><rect x="1" y="13" width="3" height="4" /><rect x="6" y="13" width="11" height="4" /></svg>
          <span className="ml-[7px] text-[#555] w-[92px] whitespace-nowrap">查看所有线程</span>
          <Sep className="ml-[11px]" />
          <svg viewBox="0 0 18 20" fill="none" stroke="#c0c0c0" className="w-[18px] h-[20px] ml-[9px]"><rect x="6.500" y="1.500" width="10" height="14" /><rect x="1.500" y="4.500" width="9" height="14" fill="#1f1f1f" strokeWidth="1.3" /></svg>
          <span className="ml-[7px] text-[#d8d8d8] whitespace-nowrap">显示外部代码</span>
        </div>
        <div className="flex-1 flex">
          <div className="flex-1 flex flex-col">
            <div className="h-[28px] flex items-center border-b border-[#333] text-[#6e6e6e] shrink-0 pt-[3px]">
              <div className="w-[20px] h-full border-r border-[#303030]" />
              <div className="w-[854px] h-full border-r border-[#303030] pl-[5px] flex items-center">名称</div>
              <div className="pl-[5px] flex items-center text-[#8a8a8a]">语言</div>
            </div>
          </div>
          <VScroll thumb="h-[112px]" />
        </div>
      </div>
      <div className="h-[24px] flex text-[15px] text-[#a0a0a0] items-stretch">
        <div className="w-[74px] border border-t-0 border-[#3f3f3f] flex items-center justify-center text-white">调用堆栈</div>
        <span className="ml-[7px] flex items-center">断点</span>
        <span className="ml-[14px] flex items-center">异常设置</span>
        <span className="ml-[14px] flex items-center">命令窗口</span>
        <span className="ml-[14px] flex items-center">即时窗口</span>
        <span className="ml-[14px] flex items-center">输出</span>
      </div>
    </div>
  );
}

function FloatingApp() {
  return (
    <div className="absolute left-[675px] top-[294px] w-[641px] h-[489px] bg-[#efefef] border border-[#6f6f6f] shadow-[0_0_28px_rgba(0,0,0,0.35)] flex flex-col">
      <div className="h-[37px] bg-white flex items-center shrink-0">
        <Mfc className="w-[19px] h-[21px] ml-[8px]" />
        <span className="ml-[6px] text-[15px] text-black">加法计算器</span>
        <X size={26} strokeWidth={0.9} className="ml-auto mr-[10px] text-black" />
      </div>
      <DlgLabel className="left-[171px] top-[110px]">被加</DlgLabel>
      <Edit className="left-[239px] top-[107px] w-[120px] h-[32px] !border-[#0078d7]"><span className="bg-[#0078d7] text-white">0</span></Edit>
      <DlgLabel className="left-[177px] top-[189px]">加数</DlgLabel>
      <Edit className="left-[245px] top-[183px] w-[124px] h-[32px]">0</Edit>
      <DlgLabel className="left-[177px] top-[267px]">和</DlgLabel>
      <Edit className="left-[243px] top-[262px] w-[126px] h-[32px]">0</Edit>
      <Btn className="left-[96px] top-[385px]">使用说明</Btn>
      <Btn className="left-[262px] top-[385px]">计算</Btn>
      <Btn className="left-[418px] top-[382px]">退出</Btn>
    </div>
  );
}

export default function App() {
  return (
    <div className="relative w-[1920px] h-[1017px] overflow-hidden bg-[#1f1f1f] flex flex-col font-['Noto_Sans','Noto_Sans_CJK_SC',sans-serif]">
      <MenuBar />
      <Toolbar1 />
      <Toolbar2 />
      <div className="mt-[17px] h-[637px] flex pl-[8px] shrink-0">
        <Editor />
        <DiagPanel />
        <SideTabs />
      </div>
      <div className="mt-[9px] h-[239px] flex pl-[8px] shrink-0">
        <AutoPanel />
        <StackPanel />
      </div>
      <div className="mt-[8px] h-[5px] bg-[#7d1a2b] shrink-0 relative">
        <div className="absolute left-[1138px] top-0 w-[138px] h-[5px] bg-[#2b2b2b] rounded-t-[4px]">
          <div className="absolute left-[23px] top-0 w-[2px] h-[5px] bg-[#1e9ae0]" />
          <div className="absolute left-[120px] top-0 w-[5px] h-[5px] rounded-t-full bg-[#f05030]" />
        </div>
      </div>
      <FloatingApp />
      <div className="absolute left-[1682px] top-[962px] text-[34px] leading-[44px] text-[#b4b4b4] whitespace-nowrap font-['Liberation_Sans',sans-serif]">CSDN @R-G-B</div>
    </div>
  );
}
